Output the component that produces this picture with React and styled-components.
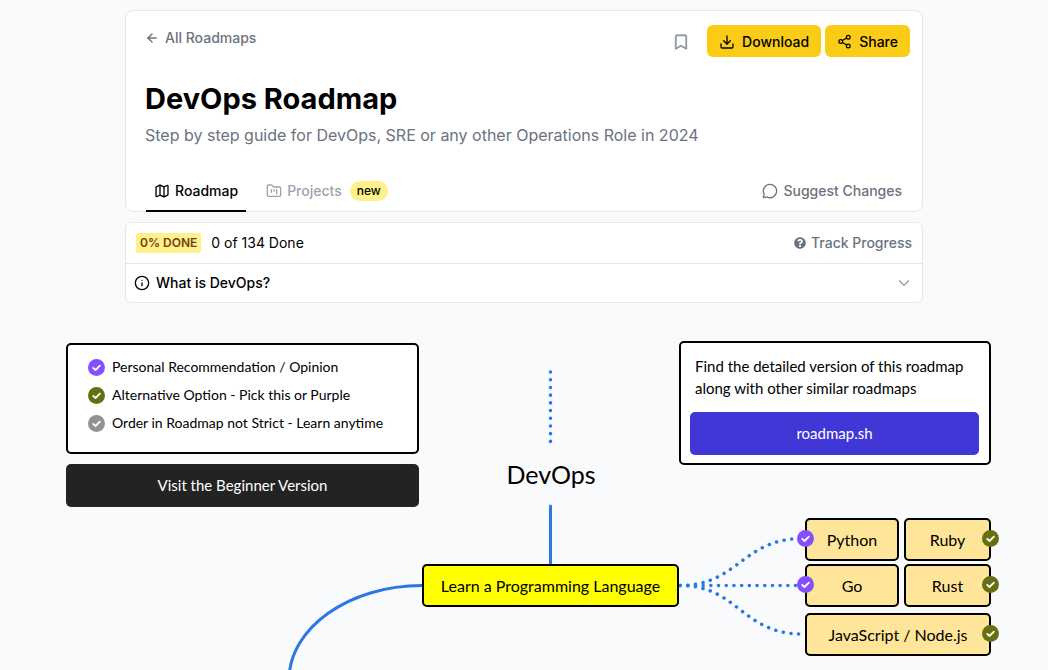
import React, { useState } from 'react'
import styled, { createGlobalStyle } from 'styled-components';
import { ArrowLeft, Bookmark, ChevronDown, Download, FolderKanban, Info, Map, MessageCircle, Share2 } from 'lucide-react';
import { FaQuestionCircle } from 'react-icons/fa';

const purple = '#874efe';
const green = '#667012';
const grey = '#929292';

const legend = [
    { color: purple, text: 'Personal Recommendation / Opinion' },
    { color: green, text: 'Alternative Option - Pick this or Purple' },
    { color: grey, text: 'Order in Roadmap not Strict - Learn anytime' },
];

// positions are relative to the canvas, which is 968px wide
const topics = [
    { label: 'Learn a Programming Language', x: 382, y: 261, w: 257, main: true },
    { label: 'Python', x: 765, y: 215, w: 94, mark: purple, side: 'left' },
    { label: 'Ruby', x: 864, y: 215, w: 87, mark: green, side: 'right' },
    { label: 'Go', x: 765, y: 261, w: 94, mark: purple, side: 'left' },
    { label: 'Rust', x: 864, y: 261, w: 87, mark: green, side: 'right' },
    { label: 'JavaScript / Node.js', x: 765, y: 310, w: 186, mark: green, side: 'right' },
];

function Check({ color }) {
    return (
        <svg width="17" height="17" viewBox="0 0 17 17" aria-hidden="true">
            <circle cx="8.5" cy="8.5" r="8.5" fill={color} />
            <path d="M5.2 8.9 7.5 11l4.4-4.3" fill="none" stroke="#fff" strokeWidth="1.8" strokeLinecap="round" strokeLinejoin="round" />
        </svg>
    )
}

function Edges() {
    return (
        <EdgeLayer viewBox="0 0 968 400" width="968" height="400" aria-hidden="true">
            <path d="M510.5 203V262" />
            <path d="M382 282.500C309 282.500 249 325 249 377V400" />
            <path className="dotted" d="M510.5 69V140" />
            <path className="dotted" d="M640 282.500C698 282.500 702 236 762 235.500" />
            <path className="dotted" d="M640 282.500H762" />
            <path className="dotted" d="M640 282.500C698 282.500 702 331 762 331" />
        </EdgeLayer>
    )
}

function Header() {
    const [tab, setTab] = useState('roadmap');
    return (
        <HeaderCard>
            <TopRow>
                <BackLink href="#roadmaps"><ArrowLeft size={14} strokeWidth={2.5} />All Roadmaps</BackLink>
                <Actions>
                    <IconButton type="button" aria-label="Bookmark"><Bookmark size={18} strokeWidth={2.5} /></IconButton>
                    <YellowButton type="button"><Download size={16} />Download</YellowButton>
                    <YellowButton type="button"><Share2 size={15} />Share</YellowButton>
                </Actions>
            </TopRow>
            <Title>DevOps Roadmap</Title>
            <Description>Step by step guide for DevOps, SRE or any other Operations Role in 2024</Description>
            <TabRow>
                <Tabs>
                    <Tab type="button" $active={tab === 'roadmap'} onClick={() => setTab('roadmap')}>
                        <Map size={16} />Roadmap
                    </Tab>
                    <Tab type="button" $active={tab === 'projects'} onClick={() => setTab('projects')}>
                        <FolderKanban size={16} />Projects<NewTag>new</NewTag>
                    </Tab>
                </Tabs>
                <Suggest href="#suggest"><MessageCircle size={16} />Suggest Changes</Suggest>
            </TabRow>
        </HeaderCard>
    )
}

function App() {
    return (
        <>
            <GlobalStyle />
            <Page>
                <Container>
                    <Header />
                    <ProgressCard>
                        <ProgressRow>
                            <DoneTag>0% DONE</DoneTag>
                            <span>0 of 134 Done</span>
                            <TrackButton type="button"><FaQuestionCircle size={12} />Track Progress</TrackButton>
                        </ProgressRow>
                        <QuestionButton type="button">
                            <Info size={16} />
                            <span>What is DevOps?</span>
                            <ChevronDown size={18} color="#9ca3af" />
                        </QuestionButton>
                    </ProgressCard>
                </Container>
                <Canvas>
                    <Edges />
                    <Legend>
                        {legend.map((item) => (
                            <li key={item.text}><Check color={item.color} />{item.text}</li>
                        ))}
                    </Legend>
                    <BeginnerLink href="#beginner">Visit the Beginner Version</BeginnerLink>
                    <RootTopic>DevOps</RootTopic>
                    <DetailBox>
                        <p>Find the detailed version of this roadmap along with other similar roadmaps</p>
                        <SiteLink href="#roadmap">roadmap.sh</SiteLink>
                    </DetailBox>
                    {topics.map((t) => (
                        <Topic key={t.label} type="button" $x={t.x} $y={t.y} $w={t.w} $main={t.main}>
                            {t.label}
                            {t.mark && <Mark $side={t.side}><Check color={t.mark} /></Mark>}
                        </Topic>
                    ))}
                </Canvas>
            </Page>
        </>
    )
}

const GlobalStyle = createGlobalStyle`
    * {
        box-sizing: border-box;
    }
    body {
        margin: 0;
        background: #f9fafc;
        color: #000;
        font-family: Inter, "Liberation Sans", sans-serif;
        font-size: 14px;
        line-height: 20px;
    }
    button {
        font: inherit;
        color: inherit;
        background: none;
        border: 0;
        padding: 0;
        cursor: pointer;
    }
    a {
        color: inherit;
        text-decoration: none;
    }
    h1, h2, p, ul {
        margin: 0;
        padding: 0;
    }
    svg {
        flex-shrink: 0;
    }
`;

const Page = styled.div`
    display: flex;
    flex-direction: column;
    min-height: 100vh;
`;

const Container = styled.div`
    width: 100%;
    max-width: 830px;
    margin: 0 auto;
    padding: 10px 16px 0;
`;

const HeaderCard = styled.header`
    background: #fff;
    border: 1px solid #e5e7eb;
    border-radius: 8px;
    padding: 14px 12px 0 19px;
`;

const TopRow = styled.div`
    display: flex;
    justify-content: space-between;
    align-items: flex-start;
`;

const BackLink = styled.a`
    display: flex;
    align-items: center;
    gap: 6px;
    line-height: 26px;
    font-weight: 500;
    color: #6b7280;
`;

const Actions = styled.div`
    display: flex;
    align-items: center;
    gap: 4px;
`;

const IconButton = styled.button`
    display: flex;
    align-items: center;
    margin-right: 13px;
    padding-top: 1px;
    color: #9299a6;
`;

const YellowButton = styled.button`
    display: flex;
    align-items: center;
    gap: 7px;
    height: 32px;
    padding: 1px 12px 0;
    border-radius: 6px;
    background: #facc15;
    font-weight: 500;
`;

const Title = styled.h1`
    margin-top: 24px;
    font-size: 29px;
    line-height: 36px;
    font-weight: 700;
`;

const Description = styled.p`
    margin-top: 6px;
    font-size: 16px;
    line-height: 24px;
    color: #6b7280;
`;

const TabRow = styled.div`
    display: flex;
    justify-content: space-between;
    align-items: center;
    margin: 23px 8px -1px 1px;
`;

const Tabs = styled.div`
    display: flex;
    gap: 12px;
`;

const Tab = styled.button`
    display: flex;
    align-items: center;
    gap: 5px;
    padding: 11px 8px 9px;
    border-bottom: 2px solid ${(p) => (p.$active ? '#000' : 'transparent')};
    color: ${(p) => (p.$active ? '#000' : '#9ca3af')};
    font-weight: 500;
`;

const NewTag = styled.span`
    margin-left: 3px;
    padding: 0 7px;
    border-radius: 10px;
    background: #fef08a;
    color: #000;
    font-size: 12px;
`;

const Suggest = styled.a`
    display: flex;
    align-items: center;
    gap: 5px;
    color: #6b7280;
    font-weight: 500;
`;

const ProgressCard = styled.section`
    margin-top: 10px;
    background: #fff;
    border: 1px solid #e5e7eb;
    border-radius: 6px;
`;

const ProgressRow = styled.div`
    display: flex;
    align-items: center;
    gap: 10px;
    padding: 10px;
    border-bottom: 1px solid #e5e7eb;
`;

const DoneTag = styled.span`
    padding: 0 4px;
    border-radius: 2px;
    background: #fef08a;
    color: #713f12;
    font-size: 12px;
    font-weight: 600;
`;

const TrackButton = styled.button`
    display: flex;
    align-items: center;
    gap: 5px;
    margin-left: auto;
    color: #6b7280;
    font-weight: 500;
`;

const QuestionButton = styled.button`
    display: flex;
    align-items: center;
    gap: 6px;
    width: 100%;
    padding: 9px 9px 9px 8px;
    font-weight: 500;

    svg:last-child {
        margin-left: auto;
    }
`;

const Canvas = styled.main`
    position: relative;
    flex: 1;
    width: 968px;
    min-height: 360px;
    margin: 0 auto;
    overflow: hidden;
    font-family: Lato, Inter, sans-serif;
    font-size: 15px;
`;

const EdgeLayer = styled.svg`
    position: absolute;
    top: 0;
    left: 0;
    fill: none;
    stroke: #2b78e4;
    stroke-width: 3;
    stroke-linecap: round;

    .dotted {
        stroke-width: 3.5;
        stroke-dasharray: 0.1 7.6;
    }
`;

const Legend = styled.ul`
    position: absolute;
    left: 26px;
    top: 40px;
    width: 353px;
    height: 111px;
    padding: 8px 20px;
    border: 2px solid #000;
    border-radius: 5px;
    background: #fff;
    font-size: 14px;
    list-style: none;

    li {
        display: flex;
        align-items: center;
        gap: 7px;
        line-height: 28px;
        white-space: nowrap;
    }
`;

const BeginnerLink = styled.a`
    position: absolute;
    left: 26px;
    top: 161px;
    width: 353px;
    border-radius: 5px;
    background: #232323;
    color: #fff;
    line-height: 43px;
    text-align: center;
`;

const RootTopic = styled.h2`
    position: absolute;
    left: 411px;
    top: 153px;
    width: 200px;
    font-size: 25px;
    line-height: 36px;
    font-weight: 400;
    text-align: center;
`;

const DetailBox = styled.section`
    position: absolute;
    left: 639px;
    top: 38px;
    width: 312px;
    padding: 12px 10px 8px 9px;
    border: 2px solid #000;
    border-radius: 5px;
    background: #fff;

    p {
        padding: 0 5px;
        line-height: 22px;
    }
`;

const SiteLink = styled.a`
    display: block;
    margin-top: 13px;
    border-radius: 5px;
    background: #4136d6;
    color: #fff;
    line-height: 43px;
    text-align: center;
`;

const Topic = styled.button`
    position: absolute;
    left: ${(p) => p.$x}px;
    top: ${(p) => p.$y}px;
    width: ${(p) => p.$w}px;
    height: 43px;
    border: 2px solid #000;
    border-radius: 5px;
    background: ${(p) => (p.$main ? '#ffff00' : '#ffe599')};
    font-size: 16px;
    white-space: nowrap;
`;

const Mark = styled.span`
    position: absolute;
    top: 10px;
    ${(p) => p.$side}: -10px;
    display: flex;
`;

export default App;
